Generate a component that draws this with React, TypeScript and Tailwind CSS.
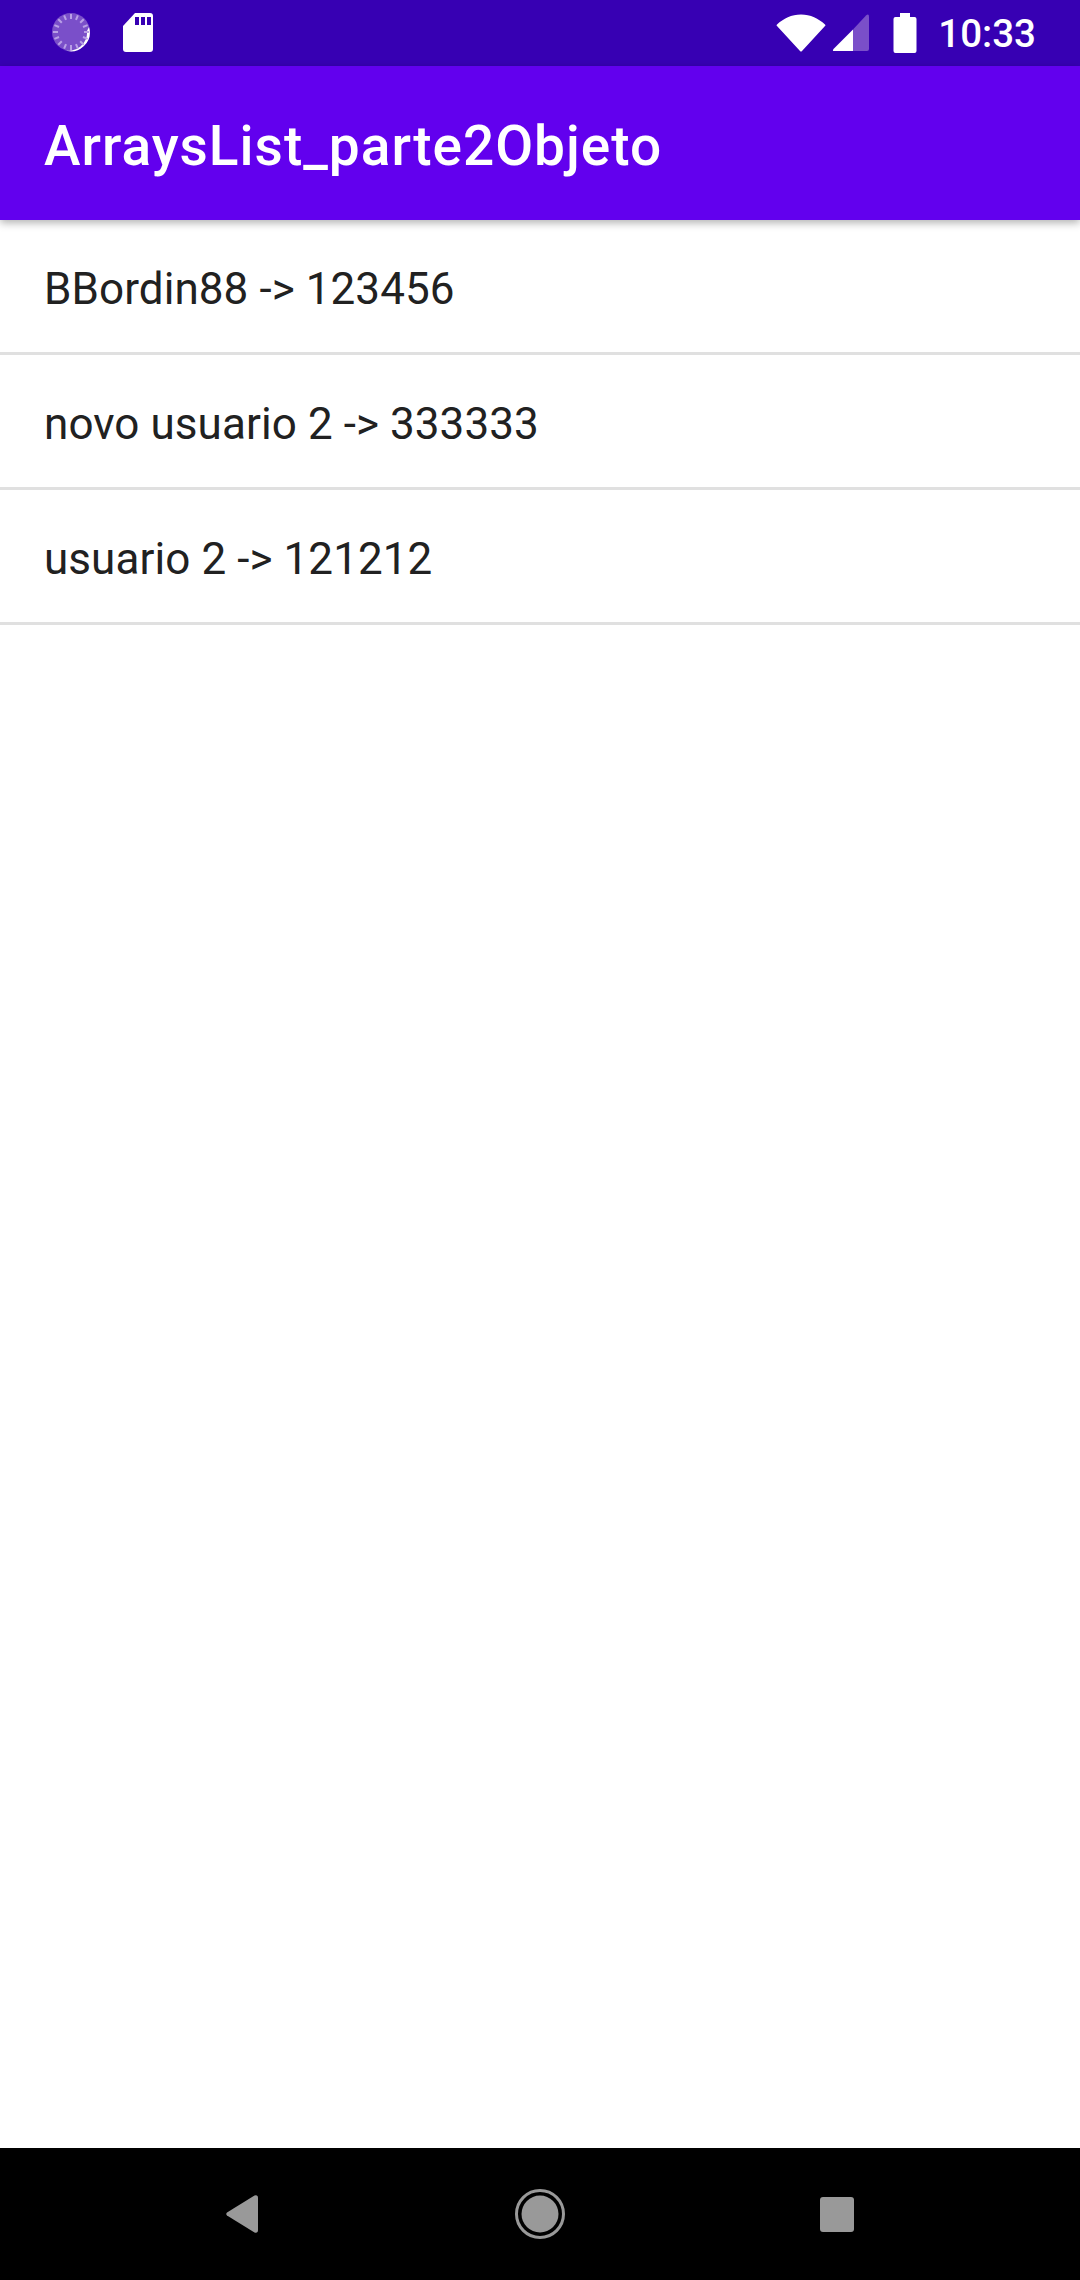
import React from "react";

const rows = ["BBordin88 -> 123456", "novo usuario 2 -> 333333", "usuario 2 -> 121212"];

function SyncIcon() {
  const ticks = Array.from({ length: 16 }, (_, i) => (i * 360) / 16);
  return (
    <svg width="42" height="42" viewBox="0 0 42 42" className="ml-[51px]">
      <circle cx="20" cy="20" r="19" fill="#7a4fc9" />
      <path d="M38 15 A19 19 0 0 1 13 38 A18 18 0 0 0 36 19 Z" fill="#fff" />
      {ticks.map((a) => (
        <rect key={a} x="19" y="2" width="2" height="5" fill="#b9a0e6" transform={`rotate(${a} 20 20)`} />
      ))}
    </svg>
  );
}

function SdIcon() {
  return (
    <svg width="32" height="40" viewBox="0 0 32 40" className="ml-[29px]">
      <path
        d="M13 0H28a3 3 0 0 1 3 3V36a3 3 0 0 1-3 3H4a3 3 0 0 1-3-3V13Z"
        fill="#fff"
      />
      <rect x="13" y="4" width="4" height="8" fill="#3700b3" />
      <rect x="19" y="4" width="4" height="8" fill="#3700b3" />
      <rect x="25" y="4" width="4" height="8" fill="#3700b3" />
    </svg>
  );
}

function WifiIcon() {
  return (
    <svg width="50" height="38" viewBox="0 0 50 38">
      <path
        d="M1 10.500C7.500 4.500 15.500 0.500 25 0.500S42.500 4.500 49 10.500a1 1 0 0 1 0 1.500L26 37a1.400 1.400 0 0 1-2 0L1 12a1 1 0 0 1 0-1.500Z"
        fill="#fff"
      />
    </svg>
  );
}

function SignalIcon() {
  return (
    <svg width="38" height="38" viewBox="0 0 38 38" className="ml-[6px]">
      <path d="M21 15.500L34 1.500Q37 -1 37 3V35a2 2 0 0 1-2 2H21Z" fill="#7a4fc9" />
      <path d="M21 15.500V37H2Q0 37 1.500 35Z" fill="#fff" />
    </svg>
  );
}

function BatteryIcon() {
  return (
    <svg width="24" height="40" viewBox="0 0 24 40" className="ml-[23px]">
      <path
        d="M7 0H17V4H21.500a2 2 0 0 1 2 2V38a2 2 0 0 1-2 2H2.500a2 2 0 0 1-2-2V6a2 2 0 0 1 2-2H7Z"
        fill="#fff"
      />
    </svg>
  );
}

export default function App() {
  return (
    <div className="flex h-[2280px] w-[1080px] flex-col bg-white font-['Roboto',sans-serif]">
      <div className="flex h-[66px] items-center bg-[#3700b3]">
        <SyncIcon />
        <SdIcon />
        <div className="ml-auto flex items-center pr-[44px]">
          <WifiIcon />
          <SignalIcon />
          <BatteryIcon />
          <span className="ml-[21px] pt-[2px] text-[38.5px] leading-none font-medium text-white">10:33</span>
        </div>
      </div>

      <header className="relative flex h-[154px] items-center bg-[#6200ee] px-[44px] pt-[6px] shadow-[0_3px_8px_rgba(0,0,0,0.3)]">
        <h1 className="text-[55px] leading-none font-medium tracking-[1px] text-white">ArraysList_parte2Objeto</h1>
      </header>

      <ul className="flex-1">
        {rows.map((row) => (
          <li
            key={row}
            className="flex h-[135px] items-center border-b-[3px] border-[#e0e0e0] px-[44px] pt-[6px] text-[44px] leading-none tracking-[0.08px] text-[#212121]"
          >
            {row}
          </li>
        ))}
      </ul>

      <nav className="flex h-[132px] items-center bg-black">
        <div className="flex w-full items-center justify-between px-[226px]">
          <svg width="32" height="38" viewBox="0 0 32 38">
            <path d="M1 17.500L28.500 0.500Q32 -0.500 32 3V35Q32 38.500 28.500 37.500L1 20.500Q-0.500 19 1 17.500Z" fill="#999" />
          </svg>
          <svg width="50" height="50" viewBox="0 0 50 50" className="ml-[2px]">
            <circle cx="25" cy="25" r="23.500" fill="none" stroke="#999" strokeWidth="3" />
            <circle cx="25" cy="25" r="18.500" fill="#999" />
          </svg>
          <div className="h-[35px] w-[34px] rounded-[3px] bg-[#999]" />
        </div>
      </nav>
    </div>
  );
}
